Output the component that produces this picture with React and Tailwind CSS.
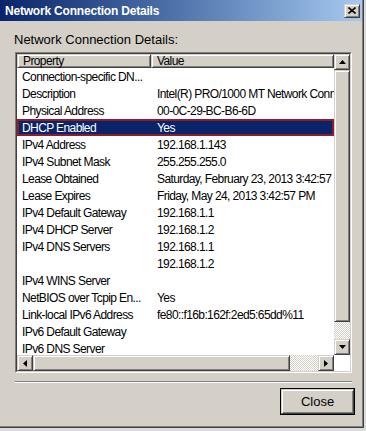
const raised =
  "border border-t-[#d4d0c8] border-l-[#d4d0c8] border-r-[#404040] border-b-[#404040] shadow-[inset_1px_1px_0_#ffffff,inset_-1px_-1px_0_#808080] bg-[#d4d0c8]";
const hatch =
  "bg-[image:repeating-conic-gradient(#d4d0c8_0%_25%,#ffffff_0%_50%)] bg-size-[2px_2px]";

const rows = [
  ["Connection-specific DN...", ""],
  ["Description", "Intel(R) PRO/1000 MT Network Connection"],
  ["Physical Address", "00-0C-29-BC-B6-6D"],
  ["DHCP Enabled", "Yes"],
  ["IPv4 Address", "192.168.1.143"],
  ["IPv4 Subnet Mask", "255.255.255.0"],
  ["Lease Obtained", "Saturday, February 23, 2013 3:42:57 PM"],
  ["Lease Expires", "Friday, May 24, 2013 3:42:57 PM"],
  ["IPv4 Default Gateway", "192.168.1.1"],
  ["IPv4 DHCP Server", "192.168.1.2"],
  ["IPv4 DNS Servers", "192.168.1.1"],
  ["", "192.168.1.2"],
  ["IPv4 WINS Server", ""],
  ["NetBIOS over Tcpip En...", "Yes"],
  ["Link-local IPv6 Address", "fe80::f16b:162f:2ed5:65dd%11"],
  ["IPv6 Default Gateway", ""],
  ["IPv6 DNS Server", ""],
];

const Arrow = ({ dir }) => {
  const pts = {
    up: "3.5,0 7,4 0,4",
    down: "0,0 7,0 3.5,4",
    left: "0,3.5 4,0 4,7",
    right: "0,0 4,3.5 0,7",
  }[dir];
  const vertical = dir === "up" || dir === "down";
  return (
    <svg width={vertical ? 7 : 4} height={vertical ? 4 : 7} viewBox={vertical ? "0 0 7 4" : "0 0 4 7"}>
      <polygon points={pts} fill="#000" />
    </svg>
  );
};

const App = () => {
  return (
    <div className="w-[366px] h-[431px] bg-[#dcdcdc] font-['Liberation_Sans',Arial,sans-serif] text-black">
      <div className="w-[364px] h-[428px] border-r border-b border-[#404040] bg-[#d4d0c8]">
        <div className="h-full border-r border-b border-[#808080] flex flex-col">
          {/* title bar */}
          <div className="h-[21px] flex items-center justify-between bg-linear-to-r from-[#0a246a] to-[#a6caf0] pl-[5px] pr-[2px]">
            <span className="text-white font-bold text-[12px] tracking-[-0.2px]">Network Connection Details</span>
            <div className={`w-[16px] h-[14px] flex items-center justify-center ${raised}`}>
              <svg width="8" height="7" viewBox="0 0 8 7">
                <path d="M0.5 0.5 L7.5 6.5 M7.5 0.5 L0.5 6.5" stroke="#000" strokeWidth="1.6" />
              </svg>
            </div>
          </div>

          <div className="ml-[14px] mt-[11px] h-[16px] leading-[16px] text-[13px]">Network Connection Details:</div>

          {/* list view */}
          <div className="ml-[15px] mt-[4px] w-[337px] h-[321px] border border-t-[#808080] border-l-[#808080] border-r-white border-b-white">
            <div className="w-full h-full border border-t-[#404040] border-l-[#404040] border-r-[#d4d0c8] border-b-[#d4d0c8] grid grid-cols-[317px_16px] grid-rows-[301px_16px] bg-white text-[12px] tracking-[-0.6px]">
              <div className="flex flex-col overflow-hidden">
                <div className="h-[14px] flex shrink-0">
                  <div className={`w-[134px] pl-[5px] flex items-center ${raised}`}>Property</div>
                  <div className={`flex-1 pl-[5px] flex items-center ${raised}`}>Value</div>
                </div>
                {rows.map(([k, v], i) => {
                  const sel = k === "DHCP Enabled";
                  return (
                    <div
                      key={i}
                      className={`h-[17px] shrink-0 flex items-center whitespace-nowrap ${
                        sel ? "bg-[#0a246a] text-white outline-2 outline-[#8b1e2a] -outline-offset-2" : ""
                      }`}
                    >
                      <div className="w-[134px] shrink-0 pl-[5px] overflow-hidden">{k}</div>
                      <div className="flex-1 pl-[6px] overflow-hidden">{v}</div>
                    </div>
                  );
                })}
              </div>

              {/* vertical scrollbar */}
              <div className="flex flex-col">
                <div className={`h-[16px] shrink-0 flex items-center justify-center ${raised}`}>
                  <Arrow dir="up" />
                </div>
                <div className={`h-[252px] shrink-0 ${raised}`} />
                <div className={`flex-1 ${hatch}`} />
                <div className={`h-[16px] shrink-0 flex items-center justify-center ${raised}`}>
                  <Arrow dir="down" />
                </div>
              </div>

              {/* horizontal scrollbar */}
              <div className="flex">
                <div className={`w-[16px] shrink-0 flex items-center justify-center ${raised}`}>
                  <Arrow dir="left" />
                </div>
                <div className={`w-[257px] shrink-0 ${raised}`} />
                <div className={`flex-1 ${hatch}`} />
                <div className={`w-[16px] shrink-0 flex items-center justify-center ${raised}`}>
                  <Arrow dir="right" />
                </div>
              </div>
              <div className="bg-white" />
            </div>
          </div>

          <div className="ml-[15px] mt-[8px] w-[337px] border-t border-[#808080] border-b border-b-white" />

          <div className="flex justify-end pr-[7px] mt-[5px]">
            <div className="w-[75px] h-[27px] border border-black">
              <div className={`w-full h-full flex items-center justify-center text-[13px] ${raised}`}>Close</div>
            </div>
          </div>
        </div>
      </div>
    </div>
  );
};

export default App;
